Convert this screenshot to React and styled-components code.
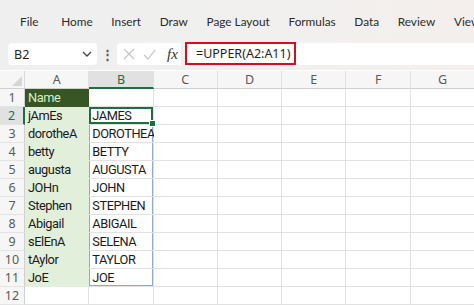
import React from 'react';
import styled, { createGlobalStyle } from 'styled-components';

const GlobalStyle = createGlobalStyle`
  html, body {
    margin: 0;
    padding: 0;
    background: #fff;
    overflow: hidden;
  }
`;

const menuItems = ['File', 'Home', 'Insert', 'Draw', 'Page Layout', 'Formulas', 'Data', 'Review', 'View'];
const columns = ['A', 'B', 'C', 'D', 'E', 'F', 'G'];
const names = ['jAmEs', 'dorotheA', 'betty', 'augusta', 'JOHn', 'Stephen', 'Abigail', 'sElEnA', 'tAylor', 'JoE'];

const App = () => {
  const rows = [];
  for (let r = 1; r <= 12; r++) rows.push(r);

  return (
    <Page>
      <GlobalStyle />
      <Chrome>
        <MenuBar>
          {menuItems.map((m) => (
            <MenuItem key={m}>{m}</MenuItem>
          ))}
        </MenuBar>

        <FormulaRow>
          <NameBox>
            <span>B2</span>
            <svg width="10" height="6" viewBox="0 0 10 6">
              <path d="M1 1 L5 5 L9 1" fill="none" stroke="#444" strokeWidth="1.3" />
            </svg>
          </NameBox>
          <Dots>⋮</Dots>
          <ActionBox>
            <svg width="12" height="12" viewBox="0 0 12 12">
              <path d="M1 1 L11 11 M11 1 L1 11" stroke="#c4c4c4" strokeWidth="1.2" />
            </svg>
            <svg width="13" height="11" viewBox="0 0 13 11">
              <path d="M1 6 L5 10 L12 1" fill="none" stroke="#c4c4c4" strokeWidth="1.2" />
            </svg>
            <Fx>fx</Fx>
          </ActionBox>
          <FormulaInput>
            <Highlight>=UPPER(A2:A11)</Highlight>
          </FormulaInput>
        </FormulaRow>
      </Chrome>

      <Sheet>
        <Corner>
          <svg width="10" height="10" viewBox="0 0 10 10">
            <path d="M10 0 L10 10 L0 10 Z" fill="#d6d6d6" />
          </svg>
        </Corner>
        {columns.map((c) => (
          <ColHeader key={c} $active={c === 'B'}>{c}</ColHeader>
        ))}

        {rows.map((r) => (
          <React.Fragment key={r}>
            <RowHeader $active={r === 2}>{r}</RowHeader>
            {columns.map((c) => {
              if (c === 'A') {
                if (r === 1) return <Cell key={c} $variant="head">Name</Cell>;
                if (r <= 11) return <Cell key={c} $variant="input">{names[r - 2]}</Cell>;
              }
              if (c === 'B' && r >= 2 && r <= 11) {
                return (
                  <Cell
                    key={c}
                    $spill={r === 2 ? 'active' : r === 11 ? 'last' : 'mid'}
                  >
                    {names[r - 2].toUpperCase()}
                    {r === 2 && <FillHandle />}
                  </Cell>
                );
              }
              return <Cell key={c} />;
            })}
          </React.Fragment>
        ))}
      </Sheet>
    </Page>
  );
};

export default App;

const Page = styled.div`
  width: 474px;
  height: 305px;
  overflow: hidden;
  background: #fff;
`;

const Chrome = styled.div`
  background: linear-gradient(90deg, #efefef 0%, #f1f0ef 60%, #f4efec 100%);
  height: 70px;
  display: flex;
  flex-direction: column;
`;

const MenuBar = styled.div`
  height: 43px;
  display: flex;
  align-items: center;
  gap: 18.7px;
  padding: 0 0 0 20px;
  white-space: nowrap;
  font-family: Lato, "Noto Sans", sans-serif;
  font-size: 11.8px;
  color: #2b2b2b;
`;

const MenuItem = styled.span`
  &:first-child {
    margin-right: 4px;
  }
`;

const FormulaRow = styled.div`
  height: 22px;
  display: flex;
  align-items: stretch;
  padding-left: 8px;
  font-family: "Noto Sans", sans-serif;
  font-size: 12.5px;
  color: #1f1f1f;
`;

const NameBox = styled.div`
  width: 89px;
  box-sizing: border-box;
  background: #fff;
  border-radius: 4px;
  display: flex;
  align-items: center;
  justify-content: space-between;
  padding: 0 5px 0 6px;
`;

const Dots = styled.div`
  width: 20px;
  display: flex;
  align-items: center;
  justify-content: center;
  font-size: 13px;
  font-weight: 700;
  color: #555;
`;

const ActionBox = styled.div`
  width: 64px;
  box-sizing: border-box;
  background: #fff;
  border-radius: 4px 0 0 4px;
  display: flex;
  align-items: center;
  gap: 8px;
  padding-left: 6px;
`;

const Fx = styled.span`
  font-family: "Liberation Serif", serif;
  font-style: italic;
  font-size: 15px;
  color: #333;
  margin-left: 3px;
`;

const FormulaInput = styled.div`
  flex: 1;
  margin-left: 4px;
  background: #fff;
  display: flex;
  align-items: stretch;
`;

const Highlight = styled.div`
  width: 111px;
  box-sizing: border-box;
  margin-top: -1px;
  border: 2.5px solid #d0101e;
  display: flex;
  align-items: center;
  padding-left: 9px;
  white-space: nowrap;
`;

const Sheet = styled.div`
  display: grid;
  grid-template-columns: 25px repeat(7, 64.3px);
  grid-auto-rows: 18px;
  margin-top: 1px;
  font-family: Roboto, "Liberation Sans", sans-serif;
  font-size: 12.8px;
  letter-spacing: -0.45px;
`;

const Corner = styled.div`
  background: #f6f6f6;
  border-right: 1px solid #d8d8d8;
  border-bottom: 1px solid #d0d0d0;
  display: flex;
  align-items: flex-end;
  justify-content: flex-end;
  padding: 0 2px 2px 0;
`;

const ColHeader = styled.div`
  background: ${(p) => (p.$active ? '#e1e1e1' : '#f6f6f6')};
  color: ${(p) => (p.$active ? '#1e6e42' : '#5a5a5a')};
  border-right: 1px solid #e2e2e2;
  border-bottom: ${(p) => (p.$active ? '2px solid #1e6e42' : '1px solid #d0d0d0')};
  display: flex;
  align-items: center;
  justify-content: center;
  font-family: "Noto Sans", sans-serif;
  font-size: 12.5px;
  letter-spacing: 0;
`;

const RowHeader = styled.div`
  background: ${(p) => (p.$active ? '#e1e1e1' : '#f6f6f6')};
  color: ${(p) => (p.$active ? '#1e6e42' : '#5a5a5a')};
  border-right: ${(p) => (p.$active ? '2px solid #1e6e42' : '1px solid #d0d0d0')};
  border-bottom: 1px solid #e4e4e4;
  display: flex;
  align-items: center;
  justify-content: center;
  font-family: "Noto Sans", sans-serif;
  font-size: 12.5px;
  letter-spacing: 0;
`;

const variantBg = {
  head: '#375623',
  input: '#e2efda',
};

const spillShadow = {
  active: 'inset 0 0 0 2px #1e6e42',
  mid: 'inset 1px 0 0 #8ea9d1, inset -1px 0 0 #8ea9d1',
  last: 'inset 1px 0 0 #8ea9d1, inset -1px 0 0 #8ea9d1, inset 0 -1px 0 #8ea9d1',
};

const Cell = styled.div`
  position: relative;
  box-sizing: border-box;
  background: ${(p) => variantBg[p.$variant] || '#fff'};
  color: ${(p) => (p.$variant === 'head' ? '#d6efc6' : '#1a1a1a')};
  border-right: 1px solid ${(p) => (p.$variant ? 'transparent' : '#e1e1e1')};
  border-bottom: 1px solid ${(p) => (p.$variant ? 'transparent' : '#e1e1e1')};
  box-shadow: ${(p) => spillShadow[p.$spill] || 'none'};
  padding: 0 3px;
  display: flex;
  align-items: center;
  white-space: nowrap;
  overflow: visible;
`;

const FillHandle = styled.span`
  position: absolute;
  right: -3px;
  bottom: -3px;
  width: 5px;
  height: 5px;
  background: #1e6e42;
  border: 1px solid #fff;
  z-index: 2;
`;
